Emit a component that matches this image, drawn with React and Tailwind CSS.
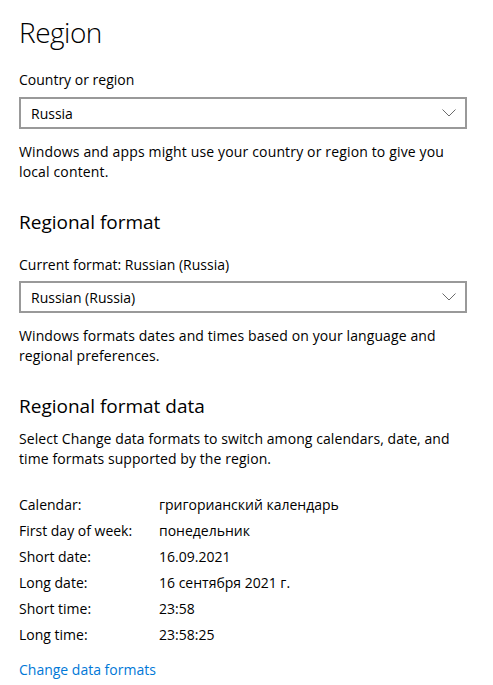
import React from 'react';

const rows = [
  ['Calendar:', 'григорианский календарь'],
  ['First day of week:', 'понедельник'],
  ['Short date:', '16.09.2021'],
  ['Long date:', '16 сентября 2021 г.'],
  ['Short time:', '23:58'],
  ['Long time:', '23:58:25'],
];

function Chevron() {
  return (
    <svg width="14" height="8" viewBox="0 0 14 8" className="shrink-0">
      <path d="M0.5 0.5 L7 7 L13.5 0.5" fill="none" stroke="#6b6b6b" strokeWidth="1" />
    </svg>
  );
}

function Select({ value }) {
  return (
    <div className="h-[32px] w-[448px] border-2 border-[#999999] bg-white flex items-center justify-between pl-[10px] pr-[9px] text-[14px] text-black">
      <span>{value}</span>
      <Chevron />
    </div>
  );
}

export default function App() {
  return (
    <div
      className="w-[493px] h-[685px] bg-white text-black overflow-hidden px-[19px] pt-[12px]"
      style={{ fontFamily: '"Open Sans", "Noto Sans", sans-serif' }}
    >
      <h1 className="text-[28px] leading-[40px] font-light tracking-[-0.5px]">Region</h1>

      <p className="mt-[18px] text-[14px] leading-[20px]">Country or region</p>
      <div className="mt-[7px]">
        <Select value="Russia" />
      </div>
      <p className="mt-[13px] text-[14px] leading-[20px] tracking-[0.15px] w-[448px]">
        Windows and apps might use your country or region to give you local content.
      </p>

      <h2 className="mt-[26px] text-[19px] leading-[28px]">Regional format</h2>
      <p className="mt-[19px] text-[14px] leading-[20px]">Current format: Russian (Russia)</p>
      <div className="mt-[6px]">
        <Select value="Russian (Russia)" />
      </div>
      <p className="mt-[13px] text-[14px] leading-[20px] tracking-[0.1px] w-[448px]">
        Windows formats dates and times based on your language and regional preferences.
      </p>

      <h2 className="mt-[26px] text-[19px] leading-[28px]">Regional format data</h2>
      <p className="mt-[9px] text-[14px] leading-[20px] tracking-[0.08px] w-[448px]">
        Select Change data formats to switch among calendars, date, and time formats supported by the region.
      </p>

      <div className="mt-[23px] grid grid-cols-[140px_1fr] text-[14px] leading-[26px]">
        {rows.map(([k, v]) => (
          <React.Fragment key={k}>
            <span>{k}</span>
            <span>{v}</span>
          </React.Fragment>
        ))}
      </div>

      <a href="#" className="block mt-[12px] text-[14px] leading-[20px] text-[#0078d7]">
        Change data formats
      </a>
    </div>
  );
}
